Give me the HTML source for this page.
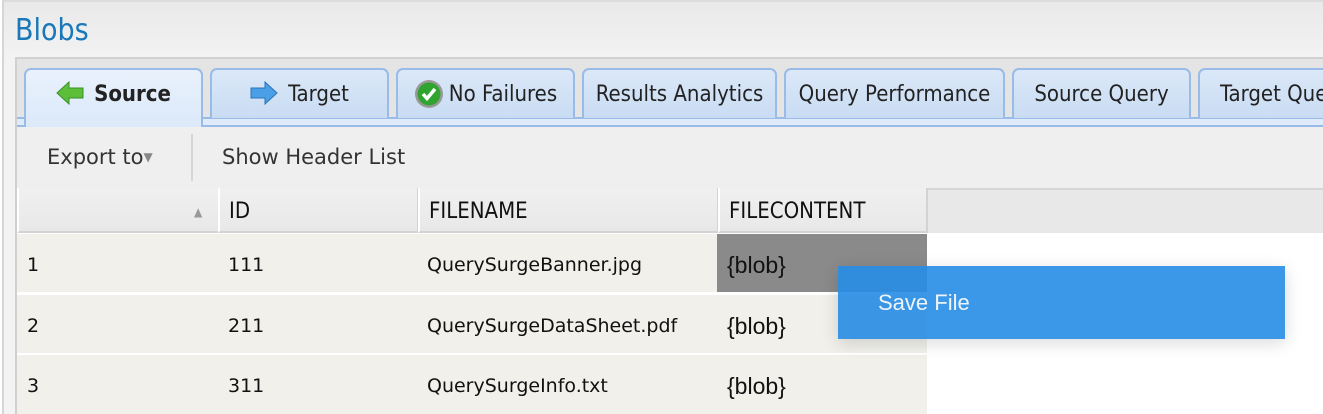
<!DOCTYPE html>
<html><head><style>
*{margin:0;padding:0;box-sizing:border-box}
html,body{width:1323px;height:414px;overflow:hidden}
body{background:#fff;position:relative;font-family:"DejaVu Sans","Liberation Sans",sans-serif}
.abs{position:absolute}
#outer{left:2px;top:0;width:1321px;height:414px;background:linear-gradient(#e9e9e9,#f3f3f3 60px);border-left:2px solid #d6d6d6;border-top:2px solid #dcdcdc}
#title{left:15px;top:13px;font-family:"DejaVu Sans Condensed","DejaVu Sans",sans-serif;font-size:30px;color:#1a78b8}
#panel{left:15px;top:57px;width:1308px;height:357px;border:2px solid #d0d0d0;border-right:none;border-bottom:none;background:#e4e4e4}
.tab{position:absolute;top:68px;height:50px;border:2px solid #99bbe8;border-bottom:none;border-radius:7px 7px 0 0;background:linear-gradient(#dbe8f8,#c9dcf3);font-family:"DejaVu Sans Condensed","DejaVu Sans",sans-serif;font-size:22px;color:#222;text-align:center;line-height:50px;white-space:nowrap;overflow:hidden}
.tab.act{background:linear-gradient(#e9f1fc,#dbe9fa);height:60px;font-weight:bold}
#band{left:17px;top:117px;width:1306px;height:10px;background:#dfeafb;border-top:2px solid #99bbe8;border-bottom:2px solid #99bbe8}
#tool{left:17px;top:127px;width:1306px;height:61px;background:#efefef}
.tt{position:absolute;top:145px;font-size:21px;color:#333}
.hd{position:absolute;top:188px;height:45px;background:linear-gradient(#f0f0f0,#e8e8e8);border-right:2px solid #d3d3d3;border-bottom:2px solid #d3d3d3;border-left:2px solid #fff;font-size:22px;color:#111;padding-left:9px;line-height:48px;font-family:"DejaVu Sans Condensed","DejaVu Sans",sans-serif}
.row{position:absolute;left:17px;width:910px;height:58px;background:#f1f0ea;font-size:19px;color:#111;line-height:62px}
.row span{position:absolute}
.bl{font-family:"Liberation Sans",sans-serif;font-size:23px}
</style></head><body>
<div id="outer" class="abs"></div>
<div id="title" class="abs">Blobs</div>
<div id="panel" class="abs"></div>
<div id="band" class="abs"></div>
<div class="tab act" style="left:24px;width:179px"><svg width="28" height="24" viewBox="0 0 28 24" style="vertical-align:-4px;margin-right:10px"><path d="M1 12 L13 1 L13 7 L27 7 L27 17 L13 17 L13 23 Z" fill="#5bbf3a" stroke="#3a8f25" stroke-width="1"/></svg>Source</div>
<div class="tab" style="left:210px;width:179px"><svg width="28" height="24" viewBox="0 0 28 24" style="vertical-align:-4px;margin-right:10px"><path d="M27 12 L15 1 L15 7 L1 7 L1 17 L15 17 L15 23 Z" fill="#4a9fe6" stroke="#2a74b8" stroke-width="1"/></svg>Target</div>
<div class="tab" style="left:396px;width:179px"><svg width="30" height="30" viewBox="0 0 30 30" style="vertical-align:-8px;margin-right:5px"><circle cx="15" cy="15" r="14" fill="#999"/><circle cx="15" cy="15" r="11.5" fill="#2fa52f"/><path d="M9 15 L13 19.5 L21 10" stroke="#fff" stroke-width="3.5" fill="none"/></svg>No Failures</div>
<div class="tab" style="left:582px;width:195px">Results Analytics</div>
<div class="tab" style="left:784px;width:221px">Query Performance</div>
<div class="tab" style="left:1012px;width:179px">Source Query</div>
<div class="tab" style="left:1198px;width:180px;text-align:left;padding-left:20px">Target Query</div>
<div id="tool" class="abs"></div>
<div class="tt" style="left:47px">Export to<span style="font-size:12px;color:#888;vertical-align:3px">▼</span></div>
<div class="abs" style="left:191px;top:134px;width:2px;height:47px;background:#d6d6d6"></div>
<div class="tt" style="left:222px">Show Header List</div>
<div class="abs" style="left:17px;top:188px;width:1306px;height:45px;background:#e8e8e8;border-top:2px solid #d6d6d6"></div>
<div class="hd" style="left:17px;width:203px"><span style="position:absolute;left:175px;top:0;font-size:12px;color:#999">▲</span></div>
<div class="hd" style="left:218px;width:201px">ID</div>
<div class="hd" style="left:418px;width:301px">FILENAME</div>
<div class="hd" style="left:718px;width:210px">FILECONTENT</div>
<div class="abs" style="left:17px;top:233px;width:1306px;height:181px;background:#fff"></div>
<div class="row" style="top:234px"><span style="left:10px">1</span><span style="left:211px">111</span><span style="left:410px">QuerySurgeBanner.jpg</span><span style="left:700px;top:0;width:210px;height:58px;background:#8a8a8a"></span><span class="bl" style="left:710px">{blob}</span></div>
<div class="row" style="top:295px"><span style="left:10px">2</span><span style="left:211px">211</span><span style="left:410px">QuerySurgeDataSheet.pdf</span><span class="bl" style="left:710px">{blob}</span></div>
<div class="row" style="top:355px;height:59px"><span style="left:10px">3</span><span style="left:211px">311</span><span style="left:410px">QuerySurgeInfo.txt</span><span class="bl" style="left:710px">{blob}</span></div>
<div class="abs" style="left:838px;top:266px;width:447px;height:73px;background:rgba(38,140,228,0.9);box-shadow:0 4px 16px rgba(0,0,0,0.15);font-family:'Liberation Sans',sans-serif;font-size:22px;color:#eef4fc;padding:24px 0 0 40px">Save File</div>
</body></html>
